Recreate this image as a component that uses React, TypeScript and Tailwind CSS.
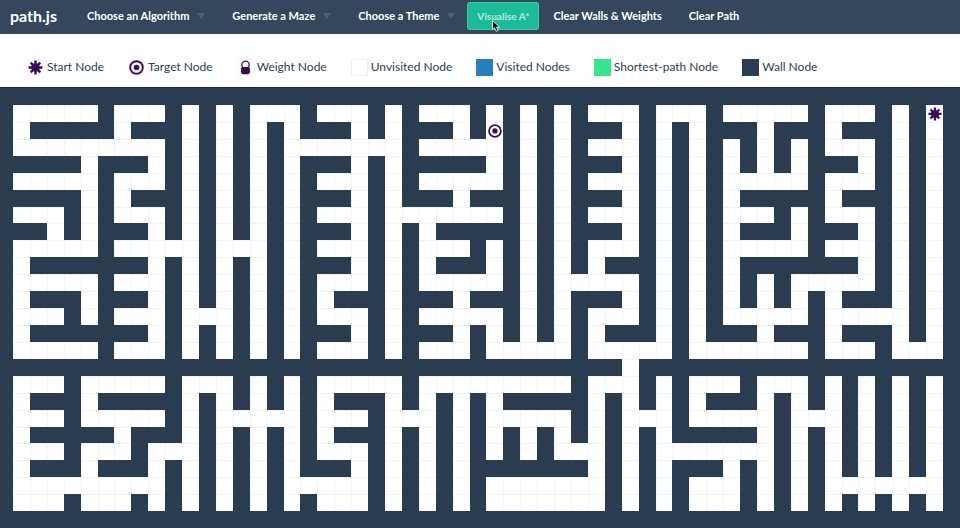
import type { ReactNode } from "react";

const MAZE = [
  ".....#...#.#.#...#" + "...#.#...#.#.#.#..." + "#...#.....#...#.#.",
  ".#####.###.#.#.#.#" + "##.#.###.#.#.#.###." + "#.#.###.###.###.#.",
  ".........#.#.#.#.." + ".....#.....#.#.#..." + "#.#.#.#.#.#...#.#.",
  "####.###.#.#.#.#.#" + "##.#.#####.#.#.###." + "#.#.#.#.#.###.#.#.",
  ".....#...#.#.#.#.#" + "...#.#.....#.#.#..." + "#.#.#.....#...#.#.",
  "####.#.###.#.#.#.#" + "##.#.###.###.#.###." + "#.#.#.#####.###.#.",
  "...#.#...#.#.#.#.#" + "...#.......#.#.#..." + "#.#.#...#.#...#.#.",
  "##.#.###.#.#.#.#.#" + "##.#.#.#####.#.###." + "#.#.#.###.###.#.#.",
  ".....#.....#...#.#" + "...#.#...#.#.#.#..." + "#.#.#.....#...#.#.",
  ".#######.#.#.#.#.#" + "##.#.#.###.#.#.#.##" + "#.#.#.#######.#.#.",
  ".....#...#.#.#.#.#" + "...#.#.....#.#....." + "#.#.#.#.#.....#.#.",
  ".###.###.#.#.#.#.#" + ".###.###.###.#.###." + "#.#.#.#.#.#.###.#.",
  "...#.#...#...#.#.#" + "...#.#.....#.#.#..." + "#.#.#.....#.....#.",
  ".#######.#.#.#.#.#" + "##.#.###.#.#.#.#.##" + "#.#.###.###.###.#.",
  ".....#...#.#.#.#.#" + "...#.#...#.....#..." + "..#.......#...#...",
  "##################" + "##################." + "##################",
  "...#.....#...#.#.#" + ".....#.........#..." + "#.#...#...#.#.#.#.",
  ".###.#####.#.#.#.#" + ".###.#.#.#.#####.#." + "#.#.###.#.#.#.#.#.",
  "...#.....#.#.....#" + "...#...#.#.....#.#." + "..#.....#...#.#.#.",
  ".#####.###.#.#.#.#" + ".###.#.#.#.#.#.#.#." + "#.#####.#.#.#.#.#.",
  "...#...#...#.#.#.#" + "...#.#.#.#.#.#...#." + "#.......#.#.#.#.#.",
  ".###.###.#.#.#.#.#" + "##.#.#.#.#######.#." + "#.###.#.#.#.#.#.#.",
  ".........#.#.#.#.." + "...#.#.#.#.......#." + "#.#...#.#.#.......",
  "...#...#.#.#.#.#.#" + "...#.#.#.#.......#." + "#.#...#.#.#.#.#.#.",
];

const START = { row: 0, col: 54 };
const TARGET = { row: 1, col: 28 };

function StartIcon() {
  return (
    <svg viewBox="0 0 17 17" className="size-full" aria-hidden="true">
      <g stroke="#3d0b5b" strokeWidth="2.4">
        <path d="M8.5 1.500v14M1.500 8.500h14" />
        <path d="M3.700 3.700l9.600 9.600M13.300 3.700l-9.600 9.600" />
      </g>
      <circle cx="8.5" cy="8.5" r="4.3" fill="#3d0b5b" />
    </svg>
  );
}

function TargetIcon() {
  return (
    <svg viewBox="0 0 17 17" className="size-full" aria-hidden="true">
      <circle cx="8.5" cy="8.5" r="6.3" fill="none" stroke="#3d0b5b" strokeWidth="1.9" />
      <circle cx="8.5" cy="8.5" r="2.8" fill="#3d0b5b" />
    </svg>
  );
}

function WeightIcon() {
  return (
    <svg viewBox="0 0 17 17" className="size-full" aria-hidden="true">
      <circle cx="8.5" cy="5.4" r="4.2" fill="none" stroke="#3d0b5b" strokeWidth="1.5" />
      <path
        d="M4.600 8h7.800q2 1.300 1 3.300 1 1.700 0 3-.3 1.900-1.800 1.900H5.400q-1.500 0-1.800-1.900-1-1.300 0-3-1-2 1-3.300z"
        fill="#3d0b5b"
      />
    </svg>
  );
}

function MenuButton({ children }: { children: ReactNode }) {
  return (
    <button type="button" aria-haspopup="menu" className="flex items-center gap-2">
      {children}
      <svg viewBox="0 0 8 6" className="h-[6px] w-[8px]" aria-hidden="true">
        <path d="M0 0h8L4 6z" fill="#4d6076" />
      </svg>
    </button>
  );
}

function LegendItem({ label, children }: { label: string; children: ReactNode }) {
  return (
    <li className="flex items-center gap-[3px]">
      <span className="block size-[17px]">{children}</span>
      {label}
    </li>
  );
}

function Maze() {
  return (
    <main
      aria-label="Maze"
      className="grid grow grid-cols-[repeat(55,minmax(0,1fr))] content-start border-t border-[#1d2c3d] bg-[#2a3c50] pt-[17px] pr-[17px] pb-4 pl-[13px]"
    >
      {MAZE.flatMap((line, row) =>
        line.split("").map((cell, col) => (
          <div
            key={`${row}-${col}`}
            className={
              cell === "#"
                ? "aspect-square bg-[#2a3c50]"
                : "aspect-square border-t border-l border-[#f3f4f6] bg-white"
            }
          >
            {row === START.row && col === START.col && <StartIcon />}
            {row === TARGET.row && col === TARGET.col && <TargetIcon />}
          </div>
        )),
      )}
    </main>
  );
}

export default function App() {
  return (
    <div className="flex min-h-screen flex-col bg-white font-[Lato,sans-serif] text-[#2c3e50]">
      <header className="flex h-[34px] items-center bg-[#34475c] pb-[2px] pl-[10px] text-[11px] font-bold whitespace-nowrap text-white">
        <h1 className="text-[16px]">path.js</h1>
        <nav className="ml-[30px] flex items-center gap-[27px]">
          <MenuButton>Choose an Algorithm</MenuButton>
          <MenuButton>Generate a Maze</MenuButton>
          <MenuButton>Choose a Theme</MenuButton>
        </nav>
        <div className="ml-[12px] flex items-center">
          <div className="relative">
            <button
              type="button"
              className="h-[28px] w-[72px] rounded-[3px] border border-dotted border-[#5fd4bd] bg-[#1abc9c] text-[10px] font-bold text-[#b5ebdf]"
            >
              Visualise A*
            </button>
            <svg
              viewBox="0 0 9 12"
              className="absolute top-[18px] left-[25px] h-[12px] w-[9px]"
              aria-hidden="true"
            >
              <path
                d="M.5.500v9.200l2.100-1.900 1.500 3.500 1.900-.8-1.500-3.400h3z"
                fill="#111"
                stroke="#fff"
                strokeWidth=".8"
              />
            </svg>
          </div>
          <button type="button" className="ml-[14px]">Clear Walls &amp; Weights</button>
          <button type="button" className="ml-[27px]">Clear Path</button>
        </div>
      </header>

      <ul className="flex h-[53px] items-center gap-[24px] pt-[13px] pl-[27px] text-[12px] whitespace-nowrap">
        <LegendItem label="Start Node">
          <StartIcon />
        </LegendItem>
        <LegendItem label="Target Node">
          <TargetIcon />
        </LegendItem>
        <LegendItem label="Weight Node">
          <span className="block size-full border border-[#f6f6f9]">
            <WeightIcon />
          </span>
        </LegendItem>
        <LegendItem label="Unvisited Node">
          <span className="block size-full border border-[#eeeff2] bg-white" />
        </LegendItem>
        <LegendItem label="Visited Nodes">
          <span className="block size-full bg-[#2580bd]" />
        </LegendItem>
        <LegendItem label="Shortest-path Node">
          <span className="block size-full bg-[#36e58c]" />
        </LegendItem>
        <LegendItem label="Wall Node">
          <span className="block size-full bg-[#2a3c50]" />
        </LegendItem>
      </ul>

      <Maze />
    </div>
  );
}
